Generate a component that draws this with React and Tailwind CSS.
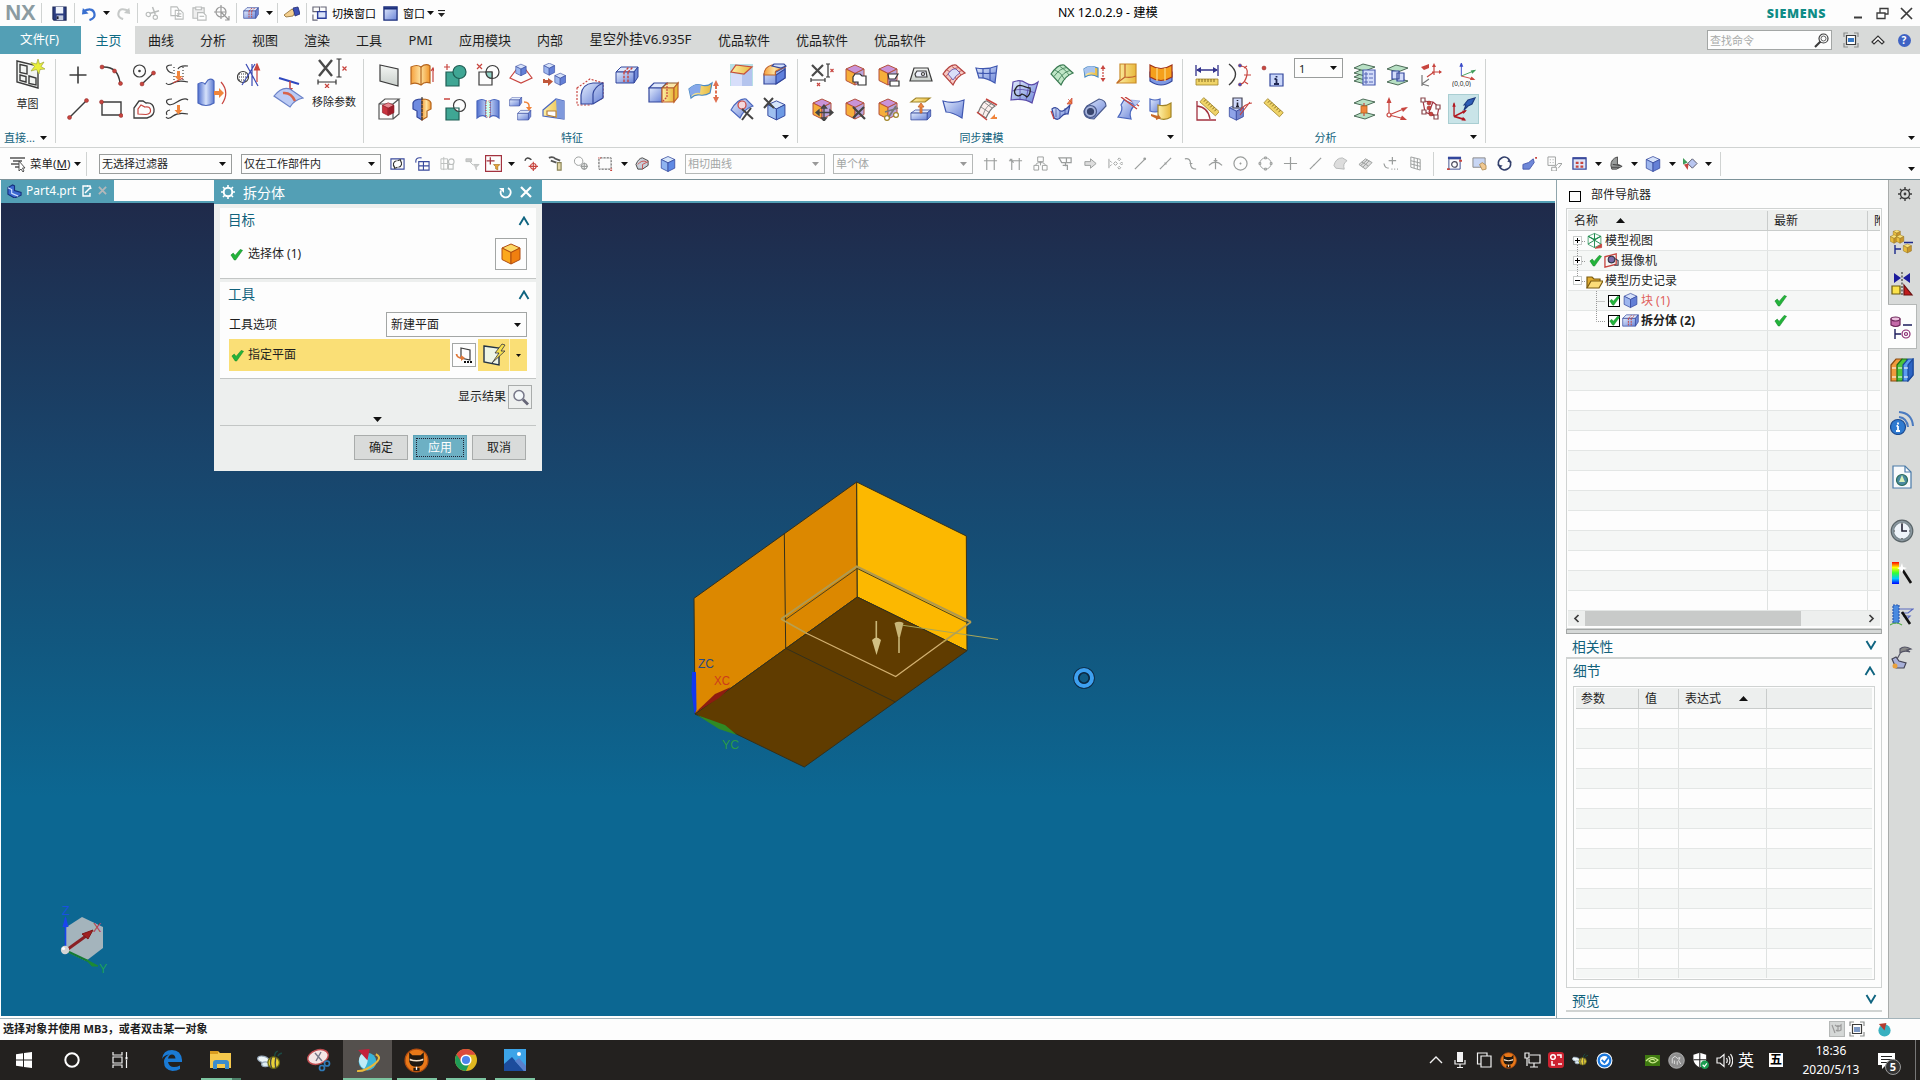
import React from 'react';

const S = ({ s = 24, v = '0 0 24 24', w, h, children, className = '' }) => (
  <svg width={w || s} height={h || s} viewBox={v} fill="none" stroke="#3c3c3c" strokeWidth="1.2" className={'shrink-0 ' + className}>
    {children}
  </svg>
);

const Defs = () => (
  <svg width="0" height="0" className="absolute">
    <defs>
      <linearGradient id="gB" x1="0" y1="0" x2="1" y2="1"><stop offset="0" stopColor="#e2ebfc" /><stop offset="1" stopColor="#6a84d8" /></linearGradient>
      <linearGradient id="gO" x1="0" y1="0" x2="1" y2="0"><stop offset="0" stopColor="#f6a03c" /><stop offset=".5" stopColor="#fde2a0" /><stop offset="1" stopColor="#f09428" /></linearGradient>
      <linearGradient id="gY" x1="0" y1="0" x2="1" y2="0"><stop offset="0" stopColor="#fdf0a8" /><stop offset="1" stopColor="#e8b83c" /></linearGradient>
      <linearGradient id="gC" x1="0" y1="0" x2="1" y2="0"><stop offset="0" stopColor="#4f6fce" /><stop offset=".5" stopColor="#d6e2fb" /><stop offset="1" stopColor="#5c7ad0" /></linearGradient>
      <linearGradient id="gP" x1="0" y1="0" x2="0" y2="1"><stop offset="0" stopColor="#f4f6f4" /><stop offset="1" stopColor="#c9cfcb" /></linearGradient>
      <linearGradient id="gR" x1="0" y1="0" x2="0" y2="1"><stop offset="0" stopColor="#f00" /><stop offset=".25" stopColor="#ff0" /><stop offset=".5" stopColor="#3f3" /><stop offset=".75" stopColor="#0cf" /><stop offset="1" stopColor="#00f" /></linearGradient>
    </defs>
  </svg>
);

const D = ({ x, y, r = 2, c = '#c8453f' }) => <circle cx={x} cy={y} r={r} fill={c} stroke="#8e2a28" strokeWidth=".5" />;
const Box = ({ t = '#d6e2fa', l = '#9db6ee', r = '#6480d6', st = '#33479c', tf }) => (
  <g transform={tf} stroke={st} strokeWidth="1" strokeLinejoin="round">
    <path d="M12 2L21 6 12 10.5 3 6z" fill={t} />
    <path d="M3 6L12 10.5V22L3 17.5z" fill={l} />
    <path d="M21 6L12 10.5V22L21 17.5z" fill={r} />
  </g>
);
const Slab = ({ tf, f = 'url(#gB)', st = '#33479c' }) => (
  <g transform={tf} stroke={st} strokeWidth="1" strokeLinejoin="round">
    <path d="M1 9L6 4H23L19 9z" fill="#dfe8fb" /><path d="M19 9L23 4V14L19 20z" fill="#6f88d8" /><path d="M1 9H19V20H1z" fill={f} />
  </g>
);
const Purp = ({ children }) => (
  <S><Box t="#c993d8" l="#f6ae3a" r="#b9a5dc" st="#b4503c" />{children}</S>
);
const Ruler = ({ tf }) => (
  <g transform={tf} strokeWidth=".8" stroke="#a08428"><path d="M1 0H23V6H1z" fill="#f0d468" /><path d="M4 0v3M7 0v3M10 0v3M13 0v3M16 0v3M19 0v3" stroke="#6b5310" /></g>
);
const Dart = ({ d, c = '#c8453f' }) => <path d={d} fill={c} stroke="none" />;
const RB = '#c8453f';

const Check = ({ s = 13 }) => (
  <S s={s} v="0 0 14 14"><path d="M1 7.5L3.5 5.5 5.5 8 11 1.5 13.5 2.5 6 13 4.5 12.8z" fill="#22b43a" stroke="#128426" strokeWidth=".6" /></S>
);
const Caret = ({ c = '#111' }) => <S w="7" h="4" v="0 0 7 4"><path d="M0 0H7L3.5 4z" fill={c} stroke="none" /></S>;
const Chev = ({ up }) => <S w="12" h="10" v="0 0 12 10"><path d={up ? 'M1.5 9L6 1.5 10.5 9' : 'M1.5 1L6 8.5 10.5 1'} stroke="#0f6480" strokeWidth="1.9" /></S>;
const RemoveParam = () => (
  <S w="30" h="30" v="0 0 30 30"><path d="M2 2L15 18M15 2L2 18" stroke="#4a4a4a" strokeWidth="2.4" /><path d="M22 1V19M19.500 1h5M19.500 19h5M1 24H19M1 21.500v5M19 21.500v5" stroke="#333" /><path d="M25.500 8.500l4 4M29.500 8.500l-4 4M8 26l4 4M12 26l-4 4" stroke={RB} /></S>
);
const RemoveParamSm = () => (
  <S><path d="M2 2L13 13M13 2L2 13" stroke="#4a4a4a" strokeWidth="2.2" /><path d="M18 1V14M16 1h4M16 14h4M1 17H15M1 15v4M15 15v4" stroke="#333" /><path d="M20.500 6l3 3M23.500 6l-3 3M7 20l3 3M10 20l-3 3" stroke={RB} /></S>
);

const sketchIcons = [
  <S><path d="M12 3.500V20.500M3.500 12H20.500" strokeWidth="1.600" /></S>,
  <S><path d="M4 20L20 4" strokeWidth="1.400" /><D x={3.500} y={20.500} /><D x={20.500} y={3.500} /></S>,
  <S><path d="M3 4Q19 3 21 20" strokeWidth="1.400" /><D x={3} y={4} /><D x={15.500} y={8} /><D x={21.500} y={20.500} /></S>,
  <S><path d="M3 5H22V18H3z" strokeWidth="1.400" /><D x={2.500} y={5} /><D x={22} y={18.500} /></S>,
  <S><circle cx="7.500" cy="8" r="6" /><circle cx="7.500" cy="8" r=".7" fill="#333" /><path d="M10 21L21 10.500" strokeWidth="1.400" /><D x={10} y={21} /><D x={21.500} y={10} /></S>,
  <S><path d="M2 21V11L7 4H11L14 6Q21 5 22 12T15 21z" strokeWidth="1.300" /><path d="M6 17V12L9 8 13 10Q18 9 18.500 13T14 17.500z" stroke={RB} /></S>,
  <S><path d="M7 2Q0 2 2 6T8 10M23 3Q15 2 13 6M1 20Q3 23 8 20T23 19" /><path d="M9 4V20M18 4V18" strokeDasharray="1 2" /><path d="M8 20Q14 17 18 15" stroke={RB} /><path d="M12 8h3v5h2.500l-4 4.500-4-4.500H12z" fill="#f0853c" stroke="none" /></S>,
  <S><path d="M7 2Q0 2 2 6T12 5T23 3M1 20Q3 23 8 19T23 17M5 13Q0 14 2 18" /><path d="M12 8h3v5h2.500l-4 4.500-4-4.500H12z" fill="#f0853c" stroke="none" /></S>,
];

const featureIcons = [
  <S><path d="M3 2L21 6V23L3 18z" fill="url(#gP)" /></S>,
  <S><path d="M2 7H16V22H2zM2 7L8 2H22L16 7M22 2V17L16 22" stroke="#555" /><Box t="#e88a92" l="#c8323f" r="#a11d2a" st="#8e1a24" tf="translate(3.500 4.500) scale(.64)" /></S>,
  <S><path d="M1 4Q7 1 11 4Q16 0 20 3V20Q15 18 11 22Q6 19 1 21z" fill="url(#gO)" stroke="#b5651d" /><path d="M11 4V22" stroke="#b5651d" /><path d="M23 6V19M21 8l2-3 1.500 3" stroke={RB} /></S>,
  <S><path d="M12 2Q4 2 3 6V12L7 14V20L12 23z" fill="#6f8be0" stroke="#33479c" /><path d="M12 2Q20 2 21 6V12L17 14V20L12 23z" fill="url(#gO)" stroke="#b5651d" /><path d="M12 0V24" strokeDasharray="3 1" /></S>,
  <S><path d="M3 9H16V23H3z" fill="#3fa694" stroke="#1f5e54" /><circle cx="16.500" cy="9" r="6.500" fill="#3fa694" stroke="#1f5e54" /><path d="M1 4H7M4 1V7" stroke={RB} /></S>,
  <S><path d="M3 11H16V23H3z" fill="#3fa694" stroke="#1f5e54" /><circle cx="16.500" cy="8.500" r="6" fill="#fdfdfd" /><path d="M10.500 11H16V14.500" stroke="#1f5e54" /><path d="M1 2H7" stroke={RB} strokeWidth="1.500" /></S>,
  <S><circle cx="16.500" cy="9" r="6.500" /><path d="M3 9H16V22H3z" /><path d="M10 9Q10 15 16 15.500V9z" fill="#8fd0c4" /><path d="M1 1l5 5M6 1L1 6" stroke={RB} /></S>,
  <S><path d="M1 4Q6 1 10 4V20Q6 17 1 21zM23 4Q18 1 14 4V20Q18 17 23 21z" fill="url(#gC)" stroke="#4a66bd" /><path d="M10 4h4V20h-4z" fill="#cfe" stroke={RB} strokeDasharray="1 1.500" /></S>,
  <S><path d="M10 3L1 15 12 20 23 15 14 3" stroke={RB} /><Box tf="translate(5 0) scale(.58)" /></S>,
  <S><Slab tf="translate(0 -2) scale(.55)" /><Slab tf="translate(8 11) scale(.6)" /><path d="M15 5Q21 5 20 11" stroke="#f0853c" strokeWidth="1.600" /><path d="M17 10h6l-3 4z" fill="#f0853c" stroke="none" /></S>,
  <S><Box tf="translate(0 -1) scale(.6)" /><Box tf="translate(11 9) scale(.6)" /><path d="M1 16V20H6V23L11 18.500 6 15V17H3V16z" fill="#c0573a" stroke="none" /></S>,
  <S><path d="M1 13L14 2 22 4V22L1 19z" fill="url(#gY)" stroke="#4a66bd" /><path d="M14 2L22 4V22L15 21z" fill="#7f99dc" stroke="none" /><path d="M5 14H14V20L5 18z" fill="#fff" stroke="#b5803d" /></S>,
];

const edgeIcons = [
  <S><path d="M0 1H23V23H0z" fill="#b8e0e6" stroke="none" /><path d="M1 10L12 12V23H1z" fill="#d7defa" stroke="none" /><path d="M12 12L22 5V23H12z" fill="#b4c4ee" stroke="none" /><path d="M6 2L22 4 14 11 1 9z" fill="url(#gY)" stroke="#c84f3a" /></S>,
  <S><path d="M1 13Q8 1 16 2L23 9Q14 12 10 21z" fill="url(#gB)" stroke="#4a66bd" /><circle cx="12" cy="8" r="4" fill="#f4d7dc" stroke={RB} /><path d="M12 12L23 22M21 11L12 23" stroke="#444" strokeWidth="2" /></S>,
  <S><path d="M1 11V21H13L22 15V4L13 9z" fill="url(#gB)" stroke="#33479c" /><path d="M13 12V21L22 15V6z" fill="#5f80dc" stroke="#33479c" /><path d="M9 2H20L22 4L13 8Q12 8 12.500 12H1Q1 4 9 2z" fill="url(#gO)" stroke="#c0622c" /><path d="M11 1H21L23 3 18 5 9 3z" fill="#cfdcfa" stroke="#33479c" /></S>,
  <S><Box t="#d6e6fa" l="#9fc0f0" r="#6d9ae4" tf="translate(2 2) scale(.95)" /><path d="M1 1L11 11M10 1L1 11" stroke="#444" strokeWidth="2" /></S>,
];

const gridSurf = (f, st) => (
  <><path d="M1 11Q8 1 14 2L23 10Q15 13 11 22z" fill={f} stroke={st} /><path d="M4 13.500Q10 5 17 4.500M8 18Q13 9 20 7.500M5 7Q11 9 15 17M10 3.500Q16 7 19 12" stroke={st} strokeWidth=".8" /></>
);
const syncIcons = [
  <RemoveParamSm />,
  <Purp><path d="M14 9V23M7 15.500H22M14 8l-2.500 3h5zM14 24l-2.500-3h5zM6 15.500l3-2.500v5zM23 15.500l-3-2.500v5z" fill="#fff" stroke="#444" strokeWidth="1.300" /></Purp>,
  <Purp><path d="M12 11h5l2 2h4v9h-8v-3h-5v-5z" fill="#fff" stroke="#333" /></Purp>,
  <Purp><path d="M10 10L22 22M21 10L10 21" stroke="#444" strokeWidth="2.200" /></Purp>,
  <Purp><path d="M12 11h10l-3 5h-6zM14 18h9v5h-9z" fill="#fff" stroke="#333" /></Purp>,
  <Purp><path d="M9 15L22 11M12 21L20 9" stroke="#777" strokeWidth="1.800" /><circle cx="11" cy="21" r="2.400" fill="#fff" stroke="#a08428" /><circle cx="20" cy="18" r="2.400" fill="#fff" stroke="#a08428" /></Purp>,
  <S><path d="M5 5H19L23 18H1z" fill="url(#gP)" /><path d="M8 8L17 8 18 14H7L6 11z" fill="#eef1fb" /><circle cx="14" cy="11" r="1.500" fill="#fff" /></S>,
  <S><path d="M7 1H21L16 5H2z" fill="url(#gY)" stroke="#a08428" /><Slab tf="translate(1 10.500) scale(.9 .62)" /><path d="M11 16V10H9L12 6l3 4h-2v6z" fill="#f0853c" stroke="#c0622c" strokeWidth=".8" /></S>,
  <S>{gridSurf('#f6c9c4', '#b4423f')}<path d="M6 11Q10 5 14 6L18 10Q14 12 11 17z" fill="#d9def8" stroke="#5a4aa8" strokeWidth=".8" /></S>,
  <S><path d="M1 4Q12 7 22 3L20 21Q10 15 4 15z" fill="url(#gB)" stroke="#3f57b0" /></S>,
  <S><path d="M1 5Q12 7 22 3L20 20Q10 14 4 15z" fill="url(#gB)" stroke="#3f57b0" /><path d="M2 10Q12 11 21 10M8 6V15M15 5V17" stroke="#3f57b0" /></S>,
  <S><path d="M3 16Q8 3 12 4L20 9Q15 12 11 21z" fill="#fdf0ee" stroke="#777" /><path d="M6 10l9 6M9 5l8 6M8 18Q11 9 16 7" stroke="#777" strokeWidth=".8" /><path d="M11 2L22 8M2 15L12 23" stroke={RB} strokeWidth="1.500" /><path d="M15 22l5-5v3h2v2h-3z" fill="#f0853c" stroke="none" /></S>,
];
const surfIcons = [
  <S>{gridSurf('#bfe6c6', '#3a7a52')}</S>,
  <S><path d="M2 12Q6 9 9 13T20 8L18 17Q14 16 11 20T4 21z" fill="url(#gB)" stroke="#33479c" /><path d="M6 11V20M10 13V21M15 11V17" strokeWidth=".7" stroke="#33479c" /><path d="M1 14L4 22" stroke={RB} /><path d="M18 2L22 6M22 1v6h-5z" fill="#f0853c" stroke={RB} strokeWidth=".7" /></S>,
  <S><path d="M1 6Q6 2 15 5V14Q8 10 2 14z" fill="url(#gY)" stroke="#4a8ac4" /><path d="M1 6Q6 2 12 4V10Q6 8 2 12z" fill="#a9c4ee" stroke="none" /><path d="M20 2l-2.500 4h5zM20 19l-2.500-4h5z" fill={RB} stroke="none" /><path d="M20 6v9" stroke={RB} strokeDasharray="2 1" /></S>,
  <S><path d="M4 9L16 2Q23 3 23 9L11 22Q1 22 1 14z" fill="url(#gB)" stroke="#4a5a8c" /><circle cx="7.500" cy="14.500" r="6" fill="#a7b4dc" stroke="#4a5a8c" /><circle cx="7.500" cy="14.500" r="3" fill="#39466f" stroke="#39466f" /></S>,
  <S><path d="M4 1H20V20H10L1 20 4 16z" fill="url(#gY)" stroke="#c98a28" /><path d="M9 1V14Q15 15 20 13M9 14L1 20" stroke="#c0622c" /></S>,
  <S><path d="M8 3L19 8Q12 14 15 22L2 20Q8 12 5 8z" fill="url(#gB)" stroke="#4a66bd" /><path d="M5 0L21 12M9 0L23 9" stroke={RB} strokeWidth="1.400" /><path d="M15 3L24 4 19 9z" fill="#b9c8f2" stroke="#7c92d8" strokeWidth=".6" /></S>,
  <S><path d="M1 9V18Q12 26 23 18V9z" fill="#7f99e4" stroke="#33479c" /><path d="M1 2Q12 9 23 2V14Q12 21 1 14z" fill="#f5a01c" stroke="#a33418" /><path d="M8 5V18M16 5V18" stroke="#fbd277" strokeWidth="1.400" /></S>,
  <S><path d="M1 2Q6 4 11 2V14Q6 16 1 14z" fill="url(#gB)" stroke="#4a66bd" /><path d="M9 8Q16 10 22 6V20Q16 24 9 21z" fill="url(#gY)" stroke="#a08428" /><path d="M2 17l7 2v-2l3 4-5 2v-1.500L2 19z" fill="#c86a28" stroke="none" /></S>,
];
const anaIcons = [
  <S><path d="M1 2V13M23 2V13M2 7H22" stroke="#33338c" strokeWidth="1.300" /><Dart d="M1 7L6 4V10zM23 7L18 4V10z" c="#33338c" /><Ruler tf="translate(0 16)" /></S>,
  <S><path d="M2 4V23H21M2 9Q13 10 15 22" stroke="#a3323f" strokeWidth="1.300" /><Ruler tf="translate(8 0) rotate(42) scale(.95)" /></S>,
  <S><path d="M1 1Q14 11 1 22" strokeWidth="1.400" /><path d="M13 3Q21 4 19 12T13 21M16 12h7M16 5l3-2M17 19l3 2" stroke={RB} /><D x={12} y={2.500} r={1.600} c="#3a4ac8" /><D x={12} y={21.500} r={1.600} c="#3a4ac8" /></S>,
  <S><Box t="#c5d2fa" l="#8fa4e8" r="#7585cc" tf="translate(-1 6) scale(.78)" /><path d="M5 1H14V11H5z" fill="#cfd9fa" stroke="#445" /><path d="M9.500 3v1M9.500 5.500v4M8 9.500h3" stroke="#223" strokeWidth="1.600" /><path d="M12 18L22 5M12 14q4-7 12-8" stroke={RB} /></S>,
  <S><D x={3} y={5} /><path d="M9 11H22V23H9z" fill="#c9d6fa" stroke="#33479c" /><path d="M15.500 13v1.500M15.500 16v5M13.500 16h2M13 21h5" stroke="#222a55" strokeWidth="1.800" /></S>,
  <S><Ruler tf="translate(6 1) rotate(42) scale(.95)" /></S>,
];
const leafs = (ys) => ys.map((y, i) => <path key={i} d={`M1 ${y}L10 ${y - 4} 22 ${y - 1} 12 ${y + 3}z`} fill="#b8e0c4" stroke="#3c5c48" strokeWidth=".9" />);
const tri = (c1, c2, c3) => (
  <><path d="M3 18V2" stroke={c1} /><path d="M3 18L20 11" stroke={c2} /><path d="M3 18L19 22" stroke={c3} /><Dart d="M3 0L.5 6H5.500z" c={c1} /><Dart d="M22 10L15 11 17 15z" c={c2} /><Dart d="M21 23L14 23 16 18.500z" c={c3} /></>
);
const layerIcons = [
  <S>{leafs([18, 14, 10, 5])}<path d="M10 7H22V22H10z" fill="#d3dcfa" stroke="#4a5cb0" /><path d="M12 10h2v2h-2zM12 14h2v2h-2zM12 18h2v2h-2zM16 11h4M16 15h4M16 19h4" stroke="#4a5cb0" strokeWidth=".9" /></S>,
  <S>{leafs([6, 19])}<path d="M11 6V19" stroke={RB} /><path d="M8 9h6v7H8z" fill="#f0853c" stroke="#b5651d" strokeWidth=".8" /></S>,
  <S>{leafs([6, 19])}<path d="M6 8h7v8H6zM11 10h7v8h-7z" fill="#d3dcfa" stroke="#33479c" /></S>,
  <S>{tri(RB, RB, RB)}<circle cx="3" cy="18" r="2" fill="#fff" stroke={RB} /></S>,
  <S><path d="M15 12V2M13 9H22M15 9L8 14" stroke={RB} /><Dart d="M23 9l-3-2v4zM15 0l-2 4h4zM2 4l8-3v4l-5 2z" /><path d="M3 23V12M3 21l7-5M3 21l7 2" stroke="#777" /></S>,
  <S><path d="M4 4L14 5 20 10 18 20 6 15zM4 4L6 15M14 5L10 15 18 20" stroke="#a3323f" /><D x={10} y={11} /><D x={12} y={17} /><D x={10} y={6} /><path d="M2 1h4v4H2zM17 8h4v4h-4zM3 13h4v4H3zM15 18h4v4h-4z" fill="#fff" stroke="#8a4a4f" /></S>,
  <S><g transform="translate(7 -1) scale(.78)">{tri('#3a4ac8', '#3f9c5a', RB)}</g><text x="0" y="23" fontSize="7" fill="#222" stroke="none" textLength="19" lengthAdjust="spacingAndGlyphs" className="font-['Liberation_Sans',sans-serif]">(0,0,0)</text></S>,
  <div className="flex h-[30px] w-[31px] shrink-0 items-center justify-center border border-[#a9ced2] bg-[#c9e4e8]"><S><g transform="translate(0 5) scale(.68 .8)" strokeWidth="2">{tri('#b01820', '#b01820', '#b01820')}</g><path d="M12 8L16 3 23 1 20 7 16 9 12 13 14 8z" fill="#2f5fb8" stroke="#1d3c80" /></S></div>,
];

const Grid2 = ({ items }) => (
  <div className="grid auto-cols-[33px] grid-flow-col grid-rows-[34px_34px]">
    {items.map((it, i) => <div key={i} className="flex items-center justify-center">{it}</div>)}
  </div>
);
const VSep = ({ className = '' }) => <div className={'w-px shrink-0 bg-[#d0d3d2] ' + className} />;
const Group = ({ label, children, className = '' }) => (
  <div className={'flex shrink-0 flex-col ' + className}>
    <div className="flex h-[76px] pt-1">{children}</div>
    <div className="relative flex h-[15px] items-center justify-center text-[11px] leading-none text-[#12627c]">
      <span className="mr-[17px]">{label}</span>
      <span className="absolute right-[8px] top-[5px]"><Caret /></span>
    </div>
  </div>
);
const Cell = ({ className, children }) => <div className={'flex shrink-0 items-center justify-center ' + className}>{children}</div>;

function TitleBar() {
  const G = '#b9bcbb';
  return (
    <div className="flex h-[26px] items-center text-[11px] text-black">
      <Cell className="w-[41px] text-[22px] font-bold leading-none text-[#8b9ba1]"><span className="font-['Liberation_Sans',sans-serif]">NX</span></Cell>
      <VSep className="h-5" />
      <Cell className="w-[34px]"><S s={15} v="0 0 16 16"><path d="M1 1H15V15H2L1 14z" fill="#2b3c80" stroke="#1c2858" /><path d="M4 1H12V8H4z" fill="#eef2fb" stroke="none" /><path d="M5 10H12V15H5z" fill="#c4cce0" stroke="none" /><path d="M6 11V14" strokeWidth="2" stroke="#223" /></S></Cell>
      <VSep className="-ml-[2px] h-5" />
      <Cell className="w-[26px]"><S s={15} v="0 0 16 16"><path d="M2 6Q12 1 14 7T9 15" stroke="#3a70d0" strokeWidth="2.400" /><path d="M1 9L2 2 8 8z" fill="#3a70d0" stroke="none" /></S></Cell>
      <Cell className="w-[11px]"><Caret /></Cell>
      <Cell className="w-[23px]"><S s={14} v="0 0 16 16"><path d="M14 6Q4 1 2 7T7 15" stroke="#c6c9c8" strokeWidth="2.400" /><path d="M15 9L14 2 8 8z" fill="#c6c9c8" stroke="none" /></S></Cell>
      <VSep className="ml-[2px] h-5" />
      <Cell className="w-[28px]"><S s={15} v="0 0 16 16"><path d="M8 1L11 9M15 5L5 8" stroke={G} strokeWidth="1.600" /><circle cx="3.500" cy="9" r="2.300" stroke={G} /><circle cx="11" cy="12" r="2.300" stroke={G} /></S></Cell>
      <Cell className="w-[21px]"><S s={14} v="0 0 16 16"><path d="M1 1H8L10 4V11H1zM6 5H12L15 8V15H6z" fill="#fff" stroke={G} /><path d="M8 9h5M8 12h5" stroke={G} /></S></Cell>
      <Cell className="w-[24px]"><S s={15} v="0 0 16 16"><path d="M1 2H13V13H1z" fill="#eee" stroke={G} /><path d="M4 1h6v3H4zM6 7H12L15 10V15H6z" fill="#fff" stroke={G} /><path d="M8 11h5" stroke={G} /></S></Cell>
      <Cell className="w-[22px]"><S s={16} v="0 0 16 16"><circle cx="7" cy="7" r="5" stroke="#999" /><path d="M7 0V14M0 7H12M7 7L15 15M15 11V15H11" stroke="#999" /></S></Cell>
      <VSep className="ml-[3px] h-5" />
      <Cell className="w-7"><SplitBody s={16} /></Cell>
      <Cell className="w-[8px]"><Caret /></Cell>
      <VSep className="ml-1 h-5" />
      <Cell className="w-[28px]"><S s={16} v="0 0 16 16"><path d="M0 10L8 4 11 7 9 11 2 12z" fill="#f4cf8e" stroke="#8a6a30" strokeWidth=".8" /><path d="M9 3L14 2 16 9 11 11z" fill="#3c4fb5" stroke="#222a70" strokeWidth=".8" /></S></Cell>
      <VSep className="h-5" />
      <Cell className="w-[25px]"><S s={15} v="0 0 16 16"><path d="M1 1H8V6H1zM9 1h6v5" stroke="#667" /><path d="M6 6H15V13H6z" fill="#dbe4fa" stroke="#2c3f9c" strokeWidth="1.500" /><path d="M1 9V15H6" stroke="#667" /></S></Cell>
      <span className="w-[50px] whitespace-nowrap leading-none">切换窗口</span>
      <Cell className="w-[17px]"><S s={15} v="0 0 16 16"><path d="M1 1H15V15H1z" fill="url(#gB)" stroke="#1b2e7c" strokeWidth="1.400" /><path d="M1 2.500H15" stroke="#1b2e7c" strokeWidth="2.500" /></S></Cell>
      <span className="ml-[4px] w-[24px] whitespace-nowrap leading-none">窗口</span>
      <Caret />
      <span className="ml-[4px]"><S w="7" h="7" v="0 0 7 7"><path d="M0 .5H7" stroke="#222" /><path d="M0 3H7L3.500 7z" fill="#222" stroke="none" /></S></span>
      <span className="ml-[613px] w-[160px] whitespace-nowrap text-[12.300px] leading-none">NX 12.0.2.9 - 建模</span>
      <span className="ml-auto mt-[3px] text-[12.500px] font-black leading-none tracking-[.6px] text-[#0f8c86] font-['Open_Sans','Noto_Sans',sans-serif]">SIEMENS</span>
      <Cell className="ml-[20px] w-6"><S s={12} v="0 0 12 12"><path d="M2 10.500H10" strokeWidth="2" /></S></Cell>
      <Cell className="w-6"><S s={13} v="0 0 13 13"><path d="M1 6H9V11.500H1zM4 6V1.500H12V7H9" strokeWidth="1.300" /></S></Cell>
      <Cell className="mr-px w-[25px]"><S s={13} v="0 0 13 13"><path d="M1 1L12 12M12 1L1 12" strokeWidth="1.700" /></S></Cell>
    </div>
  );
}

const SplitBody = ({ s = 24 }) => (
  <S s={s}><Slab /><path d="M9 9V20M9 9L14 4M13 9V20M13 9L18 4" stroke={RB} strokeDasharray="2.500 1.200" strokeWidth="1.400" /></S>
);

const Tab = ({ className, children }) => <div className={'flex h-full shrink-0 items-center justify-center whitespace-nowrap leading-none ' + className}>{children}</div>;

function TabBar() {
  return (
    <div className="flex h-7 items-center bg-[#d8dad9] text-[13px] text-[#1e1e1e]">
      <Tab className="w-[81px] bg-[#539fb5] pr-[2px] text-[12.500px] text-white">文件(F)</Tab>
      <Tab className="w-[54px] bg-[#fdfdfd] pl-px text-[#0f6b85]">主页</Tab>
      <Tab className="w-[52px]">曲线</Tab>
      <Tab className="w-[52px]">分析</Tab>
      <Tab className="w-[52px]">视图</Tab>
      <Tab className="w-[52px]">渲染</Tab>
      <Tab className="w-[52px]">工具</Tab>
      <Tab className="w-[51px]">PMI</Tab>
      <Tab className="w-[78px]">应用模块</Tab>
      <Tab className="w-[52px]">内部</Tab>
      <Tab className="w-[129px] text-[13.300px]">星空外挂V6.935F</Tab>
      <Tab className="w-[78px]">优品软件</Tab>
      <Tab className="w-[78px]">优品软件</Tab>
      <Tab className="w-[78px]">优品软件</Tab>
      <div className="ml-auto flex h-5 w-[125px] items-center justify-between border border-[#a3a6a5] bg-[#fdfdfd] pl-[2px] pr-[2px] text-[11px] leading-none text-[#a9abaa]">
        查找命令
        <S s={15} v="0 0 15 15"><circle cx="9.500" cy="5.500" r="4.500" /><circle cx="9.500" cy="5.500" r="2.500" strokeWidth=".8" /><path d="M6.500 8.500L1 14" strokeWidth="2.200" /></S>
      </div>
      <Cell className="ml-[6px] w-[26px]"><S s={16} v="0 0 16 16"><path d="M1 5V1H5M11 1H15V5M15 11V15H11M5 15H1V11" stroke="#8a8d8c" /><path d="M3.500 3.500h9v9h-9z" fill="#fff" /><path d="M5 6h6v4H5z" fill="#3a7ac4" stroke="none" /></S></Cell>
      <Cell className="w-[27px]"><S w="14" h="12" v="0 0 14 12"><path d="M1 8L7 2 13 8 11 10 7 6 3 10z" fill="#fff" stroke="#333" /></S></Cell>
      <Cell className="mr-[3px] w-[26px]"><div className="flex size-[13px] items-center justify-center rounded-full bg-[#3f63c4] text-[10px] font-bold leading-none text-white">?</div></Cell>
    </div>
  );
}

function Ribbon() {
  return (
    <div className="flex h-[94px] shrink-0 border-b border-[#d0d3d2] text-[11px] text-[#1e1e1e]">
      <div className="flex w-[55px] flex-col items-center">
        <div className="mt-[4px] h-[33px] pl-[3px]"><S s={31} v="0 0 31 31"><path d="M3 3L24 8V30L3 24z" fill="#f2f4f2" strokeWidth="1.400" /><path d="M6 6.500L13 8V16L6 14.500zM6 17L12 18.500V24L6 22.500zM15 18L22 20V27L15 25.500z" strokeWidth="1.400" /><path d="M24 1L25.500 6 30 4 27 8.500 31 11 26 11.500 25 16 22.500 11.500 17 13 20.500 8.500 17 4.500 22.500 6z" fill="#e8ee3c" stroke="#a0a83a" strokeWidth=".7" /></S></div>
        <div className="mt-[7px] leading-none">草图</div>
        <div className="mt-auto mb-[4px] flex w-full items-center pl-1 text-[11px] leading-none text-[#12627c]">直接...<span className="ml-[5px]"><Caret /></span></div>
      </div>
      <VSep className="mt-[5px] h-[84px]" />
      <div className="flex pl-[5px] pt-1">
        <Grid2 items={sketchIcons} />
        <Cell className="h-[68px] w-[38px]"><S s={30} v="0 0 30 30"><path d="M1 7Q5 4 8 7L11 3Q15 1 17 4V26Q9 31 1 26z" fill="url(#gC)" stroke="#4a66bd" /><path d="M24 5Q33 15 25 27" stroke={RB} /><path d="M17 14h5v-3l5 5-5 5v-3h-5z" fill="#f0853c" stroke="none" /></S></Cell>
        <Cell className="h-[34px] w-9"><S><circle cx="6" cy="14" r="5.500" /><path d="M0 14H12M2 11h8M2 17h8" strokeDasharray="1 1" /><path d="M9 1L21 23M15 1V23M18 1L5 22" stroke="#3a4ab5" /><path d="M20 5V19M20 1l-2.500 6h5z" fill={RB} stroke={RB} /></S></Cell>
        <Cell className="h-[68px] w-[42px]"><S s={31} v="0 0 31 31"><path d="M6 1L26 7" stroke="#2f48c0" strokeWidth="2" /><path d="M17 4V13" stroke={RB} strokeWidth="1.500" /><path d="M14 11h6l-3 5z" fill={RB} stroke="none" /><path d="M1 19Q9 9 17 12L30 21Q21 23 17 30z" fill="#bccbf4" stroke="#6a82c8" /><path d="M10 16Q18 15 22 24" stroke="#d8634a" strokeWidth="2.500" /></S></Cell>
        <div className="flex w-[50px] flex-col items-center">
          <div className="h-[32px] -ml-[4px]"><RemoveParam /></div>
          <div className="mt-[6px] whitespace-nowrap leading-none">移除参数</div>
        </div>
      </div>
      <VSep className="ml-[4px] mt-[5px] h-[84px]" />
      <Group label="特征" className="w-[433px]">
        <div className="flex pl-2">
          <Grid2 items={featureIcons} />
          <Cell className="h-[68px] w-[39px]"><S s={28} v="0 0 28 28"><path d="M1 10L14 1 27 5V20L13 27 1 27z" stroke={RB} strokeDasharray="2 1.500" /><path d="M5 17Q6 6 17 5H27V20L17 26H5z" fill="url(#gB)" stroke="#33479c" /><path d="M17 26V16Q18 9 27 5" stroke="#33479c" /></S></Cell>
          <Cell className="h-[34px] w-9"><SplitBody /></Cell>
          <Cell className="h-[68px] w-[38px]"><S w="32" h="24" v="0 0 32 24"><path d="M1 8L6 3H19L14 8z" fill="#dfe8fb" stroke="#33479c" /><path d="M14 8L19 3H30L26 8z" fill="#fbe7a8" stroke="#8a5a30" /><path d="M1 8H14V22H1z" fill="url(#gB)" stroke="#33479c" /><path d="M14 8H26V22H14z" fill="url(#gY)" stroke="#c0622c" /><path d="M26 8L30 3V17L26 22z" fill="#e8b83c" stroke="#c0622c" /><path d="M19 3V17L14 22" stroke={RB} strokeDasharray="2 1" /></S></Cell>
          <Cell className="h-[68px] w-[42px]"><S w="32" h="24" v="0 0 32 24"><path d="M1 9Q7 3 13 5T24 3L22 13Q17 16 12 15T3 18z" fill="url(#gY)" stroke="#4a8ac4" /><path d="M1 9Q7 3 13 5L12 13Q6 12 3 17z" fill="#86a8ea" stroke="none" /><path d="M28 0l-3 6h6zM28 23l-3-6h6z" fill="#e07050" stroke="none" /><path d="M28 6V17" stroke="#e07050" strokeDasharray="3 1.500" strokeWidth="2" /></S></Cell>
          <Grid2 items={edgeIcons} />
        </div>
      </Group>
      <VSep className="mt-[5px] h-[84px]" />
      <Group label="同步建模" className="w-[384px]">
        <div className="flex pl-[7px]">
          <Grid2 items={syncIcons} />
          <Cell className="h-[68px] w-[42px]"><S s={29} v="0 0 29 29"><path d="M3 4Q10 1 16 5T28 4L22 25Q14 20 1 22z" fill="url(#gB)" stroke="#5a4aa8" /><path d="M2 13Q12 9 25 15M10 3V21M19 6L16 22" stroke="#5a4aa8" strokeWidth=".8" /><path d="M6 10Q8 6 13 8T20 10Q21 16 17 19Q15 17 12 16Q9 19 6 17Q3 14 6 10z" stroke="#222" strokeWidth="1.300" /></S></Cell>
          <Grid2 items={surfIcons} />
        </div>
      </Group>
      <VSep className="mt-[5px] h-[84px]" />
      <Group label="分析" className="w-[302px]">
        <div className="flex pl-[7px]">
          <Grid2 items={anaIcons} />
          <div className="ml-[5px] mr-[5px] mt-[-2px] flex h-5 w-[49px] translate-y-[2px] items-center justify-between self-start border border-[#9a9d9c] bg-[#fdfdfd] pl-1 pr-[5px] text-[11px] leading-none">1<Caret /></div>
          <Grid2 items={layerIcons} />
        </div>
      </Group>
      <VSep className="mt-[5px] h-[84px]" />
      <div className="mb-[7px] ml-auto mr-[5px] self-end"><Caret /></div>
    </div>
  );
}

const Combo = ({ className, children, dim }) => (
  <div className={'flex h-5 shrink-0 items-center justify-between border bg-[#fdfdfd] pl-[2px] pr-[5px] text-[11px] leading-none ' + (dim ? 'border-[#b5b8b7] text-[#a3a6a5] ' : 'border-[#9a9d9c] text-[#1e1e1e] ') + className}>
    {children}<Caret c={dim ? '#999' : '#111'} />
  </div>
);
const G = '#9a9d9c';
const T = ({ d, f = 'none', c = G, w = 1, children }) => <S s={15} v="0 0 16 16"><path d={d} fill={f} stroke={c} strokeWidth={w} />{children}</S>;

const filterIcons = [
  <T c="#3a4a9c" d="M1 3H15V14H1z" w={1.200}><path d="M5 12A4 4 0 0 1 7 5M11 5A4 4 0 0 1 9 12M4 10l1 3 3-1M12 7l-1-3-3 1" stroke="#333" /></T>,
  <T c="#3a4a9c" d="M4 6H15V15H4zM4 10.500H15M9 6V15" w={1.200}><path d="M1 7Q0 1 7 2" stroke="#3a4a9c" /></T>,
  <T c="#bcbfbe" d="M1 3H8V14H1zM4 1V15M1 8H8"><circle cx="12" cy="6" r="3" stroke="#bcbfbe" /><path d="M9 9h5v5H9z" stroke="#bcbfbe" /></T>,
  <T c="#bcbfbe" d="M1 3h6v3H1zM9 9h6l-3 3v3M5 6l4 4" f="#ccc" />,
];
const selIcons = [
  <T c="#444" d="M2 5Q4 0 9 4" w={1.600}><circle cx="11" cy="11" r="3" stroke={RB} /><path d="M11 6V16M6 11H16" stroke={RB} /></T>,
  <T c="#555" d="M1 2Q5 0 8 3L13 5M3 5L9 7" w={2}><path d="M10 7h4v8h-4z" fill="#e3d7a8" stroke="#8a8458" /></T>,
  <T d="M6 1A4.500 4.500 0 1 0 10.500 5.500A4.500 4.500 0 0 0 6 1" c={G}><circle cx="12" cy="11" r="3" stroke={G} /><path d="M12 7v8M8 11h8" stroke={G} /></T>,
  <T c="#444" d="M1 2H14V14H1z"><path d="M0 2h3M14 13v3" stroke={RB} strokeWidth="2" /><path d="M1 2H14V14H1z" stroke="#fff" strokeDasharray="1.500 2" strokeWidth="1.400" /></T>,
];
const snapIcons = [
  <T d="M4 2V15M12 2V15M1 5H15" w={1.200} />, <T d="M4 3V15M12 2V15M1 5H15M2 3l4 4" w={1.200} />, <T d="M5 1h6v5H5zM1 10h5v5H1zM10 10h5v5h-5zM8 6v4M3 10Q3 7 8 7T13 10" />,
  <T d="M1 2H9V7H4zM9 2h5v5H9M5 10h5v5M8 7v4" w={1.300} />, <T d="M2 6H8V3L14 8 8 13V10H2z" f="#ddd" />, <T d="M1 3v10M2 5l2 2M2 11l2-2M8 6l2 2-2 2-2-2zM12 2l1.500 1.500L12 5l-1.500-1.500zM12 11l1.500 1.500L12 14l-1.500-1.500zM14.500 6.500L16 8l-1.500 1.500L13 8z" />,
  <T d="M2 14L13 3" w={1.300}><path d="M11 3a1.500 1.500 0 1 0 3 0a1.500 1.500 0 1 0-3 0" fill={G} stroke="none" /></T>, <T d="M2 14L14 2M7 7l2 2" w={1.300} />, <T d="M2 3Q8 2 8 8T14 14M7 8h3" w={1.300} />,
  <T d="M1 10Q8 3 15 10M8 2V14M6 5h4" w={1.300} />, <T d="M8 1A7 7 0 1 0 8 15A7 7 0 1 0 8 1M8 7v2M7 8h2" w={1.300} />, <T d="M8 2A6 6 0 1 0 8 14A6 6 0 1 0 8 2M7 1h2v2H7zM13 7h2v2h-2zM7 13h2v2H7zM1 7h2v2H1z" />,
  <T d="M8 1V15M1 8H15" w={1.300} />, <T d="M2 14L14 2M6 9l1 1" w={1.300} />, <T d="M1 10Q3 2 10 2L15 5Q10 8 12 14L3 13z" f="#ddd" c="#b5b8b7" />,
  <T d="M1 9L8 3 15 7 8 14zM4 6.500l7 4M5 12l7-7M3 10l7-6" f="#ddd" />, <T d="M10 1V9M6 5H14M1 8Q2 13 6 13M9 14h1M12 14h1M15 14h1" w={1.300} />, <T d="M3 1L13 3.500V15L3 12zM6.500 2V13M10 3V14M3 5L13 7.500M3 8.500L13 11" />,
];
const viewIcons = [
  <T c="#3a4a8c" d="M2 3H14V14H2z"><path d="M1 2H15" stroke="#33479c" strokeWidth="2.500" /><circle cx="8" cy="9" r="3" stroke="#445" /><path d="M0 14h3M13 5h3" stroke={RB} strokeWidth="2" /></T>,
  <T c="#888" d="M1 2H14V12H1z" f="#c8d6f4"><path d="M8 9l3-2 4 3v4l-4 1z" fill="#f0c890" stroke="#a07838" strokeWidth=".7" /></T>,
  <T c="#33406c" d="M13 4A6.300 6.300 0 0 0 2 10M3 12A6.300 6.300 0 0 0 14 6" w={1.800}><path d="M0 9l3 4 3-3zM16 7l-3-4-2 3z" fill="#33406c" stroke="none" /></T>,
  <T c="#4a5cb0" d="M1 9L7 7 12 3 13 7 8 14 1 14z" f="#6f88d8"><path d="M14 1h2v2h-2z" fill={RB} stroke="none" /></T>,
  <T d="M1 1H9V10H1zM3 4h1M6 4h1M3 7h1M6 7h1M5 12h5v4H5zM8 12l4-4h4l-4 5" />,
  <T c="#3a4a9c" d="M1 2H15V14H1z" f="#dfe6fa" w={1.400}><path d="M1 2.500H15" stroke="#3a4a9c" strokeWidth="2" /><path d="M4 6h3v2.500H4zM9 6h3v2.500H9zM4 10h3v2.500H4zM9 10h3v2.500H9z" fill={RB} stroke="none" /></T>,
];
const Slot = ({ children }) => <Cell className="w-[25px]">{children}</Cell>;

function MenuBar() {
  return (
    <div className="flex h-8 shrink-0 items-center border-b border-[#7c9299]">
      <div className="flex w-[86px] items-center pl-[10px] text-[11.500px] leading-none text-[#1e1e1e]">
        <S s={16} v="0 0 16 16"><path d="M0 2H15M3 5H12M1 8H9M5 11h4" stroke="#555" strokeWidth="1.500" /><path d="M9 5V15L11 13 13 16 14 15 12.500 12H15z" fill="#fff" stroke="#444" strokeWidth=".9" /></S>
        <span className="ml-[4px] whitespace-nowrap">菜单(<u>M</u>)</span><span className="ml-[4px]"><Caret /></span>
      </div>
      <VSep className="h-6" />
      <Combo className="ml-3 w-[133px]">无选择过滤器</Combo>
      <Combo className="ml-[9px] w-[140px]">仅在工作部件内</Combo>
      <div className="ml-1 flex items-center">{filterIcons.map((x, i) => <Slot key={i}>{x}</Slot>)}</div>
      <Cell className="-ml-[2px] mr-[2px] w-5"><S s={17} v="0 0 16 16"><path d="M.5.5H15.500V15.500H.5z" stroke="#a3323f" /><path d="M5 2V9M1.500 5.500H9" stroke="#a3323f" /><path d="M8 9h6l-2 2v3l-2-1v-2z" fill="#e8a83c" stroke="#a06818" strokeWidth=".6" /></S></Cell>
      <Cell className="w-[13px]"><Caret /></Cell>
      {selIcons.map((x, i) => <Slot key={i}>{x}</Slot>)}
      <Cell className="w-3"><Caret /></Cell>
      <Slot><T c="#444" d="M1 9Q4 2 8 2L14 5V10L8 14H3z" f="#c9cfd8"><path d="M3 9Q7 4 12 6M8 14V9L14 6" stroke={RB} strokeWidth=".9" /></T></Slot>
      <Slot><S s={18}><Box t="#d6e6fa" l="#8fb4f0" r="#5f8ae4" /></S></Slot>
      <Combo dim className="ml-[5px] w-[140px]">相切曲线</Combo>
      <Combo dim className="ml-[8px] w-[140px]">单个体</Combo>
      <div className="ml-[5px] flex items-center">{snapIcons.map((x, i) => <Slot key={i}>{x}</Slot>)}</div>
      <VSep className="ml-[5px] h-6" />
      <div className="ml-[8px] flex items-center">{viewIcons.map((x, i) => <Slot key={i}>{x}</Slot>)}</div>
      <Cell className="w-3"><Caret /></Cell>
      <Slot><T c="#444" d="M2 10Q2 3 9 1V9L14 11 8 14H3z" f="#9a9d9c"><path d="M4 9L12 10M3 12h8" stroke="#444" /></T></Slot>
      <Cell className="w-[10px]"><Caret /></Cell>
      <Cell className="w-[27px]"><S s={18}><Box /></S></Cell>
      <Cell className="w-3"><Caret /></Cell>
      <Cell className="w-6"><T c="#556" d="M10 3L15 8 10 13 5 8z" f="#b9c6f0"><path d="M0 2l5 5-5 2z" fill="#3f9c5a" stroke="none" /><path d="M1 9l5-1-1 7z" fill={RB} stroke="none" /></T></Cell>
      <Cell className="w-3"><Caret /></Cell>
      <VSep className="ml-[6px] h-6" />
      <div className="ml-auto mr-[5px] mt-[10px]"><Caret /></div>
    </div>
  );
}

const Scene = () => (
  <svg width="1554" height="814" viewBox="1 203 1554 814" fill="none" className="block font-['Liberation_Sans',sans-serif]">
    <g stroke="#33301c" strokeWidth="1" strokeLinejoin="round">
      <path d="M856.700 482L694 598.300 695 714 857.300 597z" fill="#dc8800" />
      <path d="M856.700 482L966.300 536 967 650.700 857.300 597z" fill="#fcb800" />
      <path d="M857.300 597L967 650.700 804.300 767 695 714z" fill="#603c00" />
      <path d="M784.300 533.300L785.700 648.300M785.700 648.300L895.300 702" />
    </g>
    <path d="M781 619L856.700 566.500 971 622" stroke="#b09a50" strokeWidth="2" />
    <path d="M781 619L806 633M971 622L943 642" stroke="#b8a050" strokeWidth="1.600" />
    <path d="M785 620L857.300 568.500 966 622" stroke="#4a4220" strokeWidth="1" />
    <path d="M806 633L895.700 676.500 943 642" stroke="#d2b070" strokeWidth="1.300" />
    <path d="M903 625.300L998 639.500" stroke="#a8a65a" />
    <path d="M876.300 621V640M899 635V653" stroke="#c9b678" strokeWidth="1.600" />
    <path d="M872 640Q876.500 635 881 640L876.500 655z" fill="#d2c083" /><path d="M894.500 623Q899 620.500 903.500 623L900 637H898z" fill="#c9b678" />
    <path d="M692 672L696 672 696.500 710 694.500 714 691.500 692z" fill="#1238f0" />
    <path d="M695 713L715 694 731 687 719 698z" fill="#8e1c10" />
    <path d="M697 715L725 725 737 735 719 729z" fill="#2f8a24" />
    <g fontSize="13.500"><text x="698" y="667.500" fill="#2a4a84" textLength="16" lengthAdjust="spacingAndGlyphs">ZC</text><text x="714" y="684.500" fill="#cc3c1c" textLength="16" lengthAdjust="spacingAndGlyphs">XC</text><text x="722" y="749" fill="#2a9a48" textLength="17" lengthAdjust="spacingAndGlyphs">YC</text></g>
    <circle cx="1084" cy="678" r="8" stroke="#0c2740" strokeWidth="5.600" /><circle cx="1084" cy="678" r="8" stroke="#3ea0f0" strokeWidth="4" /><circle cx="1084" cy="678" r="5" stroke="#0c2740" strokeWidth="1.200" />
    <path d="M82 917L103 927V948L86 961 65 951V928z" fill="#a4b4bc" />
    <path d="M65.500 950V918" stroke="#1a44ee" strokeWidth="1.600" /><path d="M62.500 927L65.500 916 68.500 927z" fill="#1a44ee" />
    <path d="M68 949L86 936" stroke="#8a2024" strokeWidth="3" /><path d="M82 934L93 930 88 939z" fill="#a02020" stroke="#7c1818" />
    <path d="M69 952L88 961" stroke="#147a34" strokeWidth="2" /><path d="M86 959.500L98 966 92 966z" fill="#1c8a34" stroke="#1c8a34" />
    <circle cx="65" cy="950" r="4.200" fill="#d4d4d4" /><circle cx="63.500" cy="948.500" r="1.600" fill="#fff" />
    <g fontSize="12.500"><text x="62" y="914.500" fill="#1a50e0">Z</text><text x="93" y="932" fill="#b8404c">X</text><text x="99" y="973" fill="#1ca058">Y</text></g>
  </svg>
);

const Btn = ({ children, active }) => (
  <div className={'flex h-[25px] w-[54px] items-center justify-center border p-[2px] leading-none ' + (active ? 'border-[#5ba3b8] bg-[#6db0c4] text-white' : 'border-[#a9acab] bg-[#d9dbda]')}>
    <span className={'flex h-full w-full items-center justify-center ' + (active ? 'border border-dotted border-[#223]' : '')}>{children}</span>
  </div>
);

const Dialog = () => (
  <div className="absolute left-[214px] top-0 flex h-[291px] w-[328px] flex-col bg-[#edefee] text-[12px] text-[#1e1e1e]">
    <div className="flex h-6 items-center bg-[#539fb5] pl-[7px] pr-[10px] text-[14px] leading-none text-white">
      <S s={14} v="0 0 14 14"><circle cx="7" cy="7" r="4.300" stroke="#fff" strokeWidth="2" /><path d="M7 0v3M7 11v3M0 7h3M11 7h3M2 2l2 2M10 10l2 2M2 12l2-2M10 4l2-2" stroke="#fff" strokeWidth="1.600" /></S>
      <span className="ml-[8px] mt-px">拆分体</span>
      <span className="ml-auto mr-[8px]"><S s={13} v="0 0 13 13"><path d="M9 2A5 5 0 1 1 2 4.500" stroke="#fff" strokeWidth="1.900" /><path d="M0 2h5v5z" fill="#fff" stroke="none" /></S></span>
      <S s={12} v="0 0 12 12"><path d="M1 1L11 11M11 1L1 11" stroke="#fff" strokeWidth="2.200" /></S>
    </div>
    <div className="mx-[6px] mt-1 h-[71px] border-b border-[#c3c6c5] bg-[#fdfdfd] pl-2 pr-[9px]">
      <div className="flex h-[25px] items-center justify-between text-[13.500px] leading-none text-[#12627c]">目标<span className="-mr-[3px]"><Chev up /></span></div>
      <div className="mt-[5px] flex h-8 items-center leading-none"><span className="ml-[2px]"><Check /></span><span className="ml-[5px]">选择体 (1)</span>
        <div className="ml-auto flex size-8 items-center justify-center border border-[#a3a6a5]"><S><Box t="#fdd864" l="#fca81c" r="#f08010" st="#b04c10" /></S></div>
      </div>
    </div>
    <div className="mx-[6px] mt-[3px] h-[97px] border-b border-[#c3c6c5] bg-[#fdfdfd] pl-2 pr-[9px]">
      <div className="flex h-[26px] items-center justify-between text-[13.500px] leading-none text-[#12627c]">工具<span className="-mr-[3px]"><Chev up /></span></div>
      <div className="mt-[4px] flex h-[25px] items-center justify-between pl-[1px] leading-none">工具选项
        <div className="flex h-[25px] w-[141px] items-center justify-between border border-[#a3a6a5] pl-1 pr-[5px]">新建平面<Caret /></div>
      </div>
      <div className="mt-[2px] flex h-8 items-center pl-[1px] leading-none">
        <div className="flex h-8 w-[221px] items-center bg-[#fadf76] pl-[2px]"><Check /><span className="ml-[4px]">指定平面</span></div>
        <div className="ml-[2px] flex size-6 items-center justify-center border border-[#a3a6a5]"><S s={18} v="0 0 18 18"><path d="M6 2L15 4V14L6 12z" /><path d="M1.500 8Q2 12 7 12" stroke="#e07838" strokeWidth="1.800" /><path d="M6 9v6l4-3z" fill="#e07838" stroke="none" /><path d="M9 16h2M12 16h2M15 16h2" stroke="#111" strokeWidth="2" /></S></div>
        <div className="ml-[2px] flex h-8 w-[31px] items-center justify-center bg-[#fadf76]"><S><path d="M2 3L17 5V22L2 19z" fill="#eef5e6" stroke="#234" strokeWidth="1.400" /><path d="M20 1L13 10H17L10 20 23 8H19L23 2z" fill="#f7e14c" stroke="#334" strokeWidth=".8" /></S></div>
        <div className="flex h-8 flex-1 items-center justify-center border-l border-[#fdf3c8] bg-[#fadf76]"><S w="5" h="3" v="0 0 7 4"><path d="M0 0H7L3.500 4z" fill="#111" stroke="none" /></S></div>
      </div>
    </div>
    <div className="mt-[6px] flex h-6 items-center justify-end pr-[10px] leading-none">显示结果
      <div className="ml-[2px] flex size-6 items-center justify-center border border-[#a9acab]"><S s={17} v="0 0 17 17"><circle cx="7" cy="6.500" r="5" fill="#f4f8fa" stroke="#778" strokeWidth="1.500" /><path d="M11 10.500L16 15.500" stroke="#667" strokeWidth="2.800" /></S></div>
    </div>
    <div className="mx-[6px] flex h-[17px] items-center justify-center border-b border-[#c3c6c5] pr-[1px] pt-[4px]"><S w="9" h="5" v="0 0 7 4"><path d="M0 0H7L3.500 4z" fill="#111" stroke="none" /></S></div>
    <div className="mt-[9px] flex justify-end gap-[5px] pr-4"><Btn>确定</Btn><Btn active>应用</Btn><Btn>取消</Btn></div>
  </div>
);

const Expander = ({ minus }) => (
  <div className="relative z-10 flex size-[9px] shrink-0 items-center justify-center border border-[#c9cccb] bg-white"><div className="h-px w-[5px] bg-black" />{!minus && <div className="absolute h-[5px] w-px bg-black" />}</div>
);
const CheckBox = () => <div className="flex size-3 shrink-0 items-center justify-center border border-black bg-white"><Check s={11} /></div>;

const rows = [
  <><Expander /><span className="ml-[4px]"><S s={17}><Box t="none" l="none" r="none" st="#1c8a4c" /><path d="M12 2V10M3 17L21 6M3 6L21 17" stroke="#1c8a4c" strokeWidth="1.400" /><path d="M13 23L22 17V22z" fill={RB} stroke={RB} /></S></span><span className="ml-[2px]">模型视图</span></>,
  <><Expander /><span className="ml-[7px]"><Check /></span><span className="ml-[2px]"><S s={15} v="0 0 16 16"><path d="M1 4L13 1V12L1 15z" stroke={RB} strokeWidth="1.400" /><circle cx="8" cy="7" r="3.500" fill="#7a6aa8" stroke="#334" /><path d="M12 6l3 2v5h-4" stroke="#334" /></S></span><span className="ml-[2px]">摄像机</span></>,
  <><Expander minus /><span className="ml-[4px] mt-[3px]"><S w="17" h="14" v="0 0 17 14"><path d="M1 13V2H6L8 4H14V6" fill="#e0ac30" stroke="#7a5a10" /><path d="M1 13L5 6H17L13 13z" fill="#fbdc78" stroke="#7a5a10" /></S></span><span className="ml-[2px]">模型历史记录</span></>,
  <><span className="w-[35px]" /><CheckBox /><span className="ml-[2px]"><S s={17}><Box /></S></span><span className="ml-[2px] text-[#e0605c]">块 (1)</span></>,
  <><span className="w-[35px]" /><CheckBox /><span className="ml-[2px]"><SplitBody s={17} /></span><span className="ml-[2px] font-bold">拆分体 (2)</span></>,
];

function SidePanel() {
  return (
    <div className="flex w-[332px] flex-col border-l border-[#8fa5ac] pl-[9px] text-[12px] leading-none text-[#1e1e1e]">
      <div className="flex h-7 items-center pl-[3px] pt-[2px]"><div className="mt-[2px] h-[11px] w-[12px] border border-black" /><span className="ml-[10px]">部件导航器</span></div>
      <div className="relative flex h-[421px] w-[316px] flex-col border border-[#d0d3d2] p-px">
        <div className="flex h-[21px] items-center border-b border-[#c9cccb] bg-[#edefee] pt-px">
          <div className="flex h-full w-[200px] items-center border-r border-[#c9cccb] pl-[6px]">名称<span className="ml-[18px]"><S w="9" h="5" v="0 0 9 5"><path d="M0 5H9L4.500 0z" fill="#111" stroke="none" /></S></span></div>
          <div className="flex h-full w-[100px] items-center border-r border-[#c9cccb] pl-[6px]">最新</div>
          <div className="w-[12px] overflow-hidden whitespace-nowrap pl-[6px]">附</div>
        </div>
        <div className="h-[380px] overflow-hidden">
          {Array.from({ length: 19 }, (_, i) => (
            <div key={i} className={'flex h-5 border-b border-[#e3e6e5] ' + (i % 2 ? 'bg-[#f5f7f6]' : 'bg-[#fdfdfd]')}>
              <div className="flex w-[200px] items-center border-r border-[#dfe2e1] pl-[5px]">{rows[i]}</div>
              <div className="flex w-[100px] items-center border-r border-[#dfe2e1] pl-[6px]">{(i === 3 || i === 4) && <Check />}</div>
            </div>
          ))}
        </div>
        <svg width="40" height="100" className="absolute left-[6px] top-[22px]" fill="none" stroke="#999" strokeDasharray="1 1"><path d="M4.500 10V50M9 10.500H13M9 30.500H13M9 50.500H13M23.500 60V90.500H32M23.500 70.500H32" /></svg>
        <div className="flex h-[15px] items-center bg-[#edefee]">
          <Cell className="w-[17px]"><S w="7" h="9" v="0 0 7 9"><path d="M5.500 1L2 4.500 5.500 8" strokeWidth="1.700" /></S></Cell>
          <div className="h-full w-[216px] bg-[#c8cac9]" />
          <Cell className="ml-auto w-[17px]"><S w="7" h="9" v="0 0 7 9"><path d="M1.500 1L5 4.500 1.500 8" strokeWidth="1.700" /></S></Cell>
        </div>
      </div>
      <div className="h-[5px] w-[316px] border border-[#a3a6a5] bg-[#d5d8d7]" />
      <div className="flex h-[25px] w-[316px] items-center justify-between border-b-2 border-[#d0d3d2] pl-[6px] pr-[5px] pt-[2px] text-[13.800px] text-[#12627c]">相关性<span className="-mt-[3px]"><Chev /></span></div>
      <div className="h-[329px] w-[316px] border border-t-0 border-[#d0d3d2] px-[6px]">
        <div className="flex h-[27px] items-center justify-between pb-[4px] text-[13.800px] text-[#12627c]">细节<span className="-mr-[1px]"><Chev up /></span></div>
        <div className="h-[294px] w-[302px] border border-[#d0d3d2] p-[2px] pt-px">
          <div className="flex h-[21px] items-center border-b border-[#c9cccb] bg-[#edefee] pt-px">
            <div className="flex h-full w-[63px] items-center border-r border-[#c9cccb] pl-[5px]">参数</div>
            <div className="flex h-full w-[40px] items-center border-r border-[#c9cccb] pl-[6px]">值</div>
            <div className="flex h-full w-[88px] items-center border-r border-[#c9cccb] pl-[6px]">表达式<span className="ml-[18px]"><S w="9" h="5" v="0 0 9 5"><path d="M0 5H9L4.500 0z" fill="#111" stroke="none" /></S></span></div>
          </div>
          <div className="h-[269px] overflow-hidden">
            {Array.from({ length: 14 }, (_, i) => (
              <div key={i} className={'flex h-5 border-b border-[#e3e6e5] ' + (i % 2 ? 'bg-[#f5f7f6]' : 'bg-[#fdfdfd]')}>
                <div className="w-[63px] border-r border-[#dfe2e1]" /><div className="w-[40px] border-r border-[#dfe2e1]" /><div className="w-[88px] border-r border-[#dfe2e1]" />
              </div>
            ))}
          </div>
        </div>
      </div>
      <div className="flex h-[24px] w-[316px] items-center justify-between border-b-2 border-[#d0d3d2] pl-[6px] pr-[5px] pt-[3px] text-[13.800px] text-[#12627c]">预览<span className="-mt-[3px]"><Chev /></span></div>
    </div>
  );
}

const stripIcons = [
  ['h-[27px] pl-[5px]', <S s={14} v="0 0 14 14"><circle cx="7" cy="7" r="4.500" strokeWidth="1.400" /><circle cx="7" cy="7" r=".8" fill="#333" /><path d="M7 0v2.500M7 11.500V14M0 7h2.500M11.500 7H14M2 2l1.800 1.800M10.200 10.200L12 12M2 12l1.800-1.800M10.200 3.800L12 2" strokeWidth="1.400" /></S>],
  ['mt-[13px] h-[44px]', <S><Box t="#fbe27a" l="#e8bc3c" r="#c8962c" st="#8a6a18" tf="translate(2 -1) scale(.4)" /><Box t="#fbe27a" l="#e8bc3c" r="#c8962c" st="#8a6a18" tf="translate(-1 4) scale(.42)" /><Box t="#fbe27a" l="#e8bc3c" r="#c8962c" st="#8a6a18" tf="translate(5 4) scale(.42)" /><Box t="#fbe27a" l="#e8bc3c" r="#c8962c" st="#8a6a18" tf="translate(12 13) scale(.45)" /><path d="M5 15V24M5 19H11M14 12.500H23" stroke="#1c2a8c" strokeWidth="1.400" /></S>],
  ['h-[40px]', <S><path d="M4 1L11 6 4 11zM20 1L13 6 20 11z" fill="#1c1c9c" stroke="none" /><path d="M12 0V24" strokeDasharray="2 1.500" /><path d="M2 14H10V22H2z" fill="#fbe24a" stroke="#6a5a10" /><path d="M14 13L22 23H14z" fill="#c01c1c" stroke="#6a1010" /></S>],
  ['h-[45px] bg-[#fdfdfd] w-[29px] self-start -ml-px border-y border-r border-[#b5b8b7]', <S><path d="M1 4V10Q6 13 10 10V4z" fill="#c46aa8" stroke="#6c2458" /><ellipse cx="5.500" cy="4" rx="4.500" ry="2" fill="#eec2e0" stroke="#6c2458" /><path d="M5 14V24M5 19H11M13 10H22" stroke="#1c1c5c" strokeWidth="1.400" /><circle cx="16" cy="19" r="4" stroke="#8a2870" /><circle cx="16" cy="19" r="1.500" stroke="#8a2870" /></S>],
  ['h-[42px]', <S><path d="M1 7L6 1H12V17L7 23H1z" fill="#f09a3c" stroke="#8a4a10" /><path d="M7 7L12 1H17V17L12 23H7z" fill="#4cc43c" stroke="#1c6a18" /><path d="M13 7L18 1H23V17L18 23H13z" fill="#5a9cf0" stroke="#1c4a9c" /><path d="M18 7V23L23 17V1z" fill="#2c64c4" stroke="#1c4a9c" /><path d="M2 10h4M2 19h4M8 10h4M8 19h4M14 10h4M14 19h4" stroke="#fff" /></S>],
  ['mt-[9px] h-[46px]', <S><circle cx="8" cy="16" r="7.500" fill="#2f7ad0" stroke="#1c4a90" /><path d="M8 11.500v2M8 15v5M6.500 15H8M6 20h4" stroke="#fff" strokeWidth="1.800" /><path d="M9 6Q17 7 18 16M9 1Q22 2 23 15" stroke="#4a7ac0" strokeWidth="2" /></S>],
  ['mt-[8px] h-[45px]', <S><path d="M3 1H15L21 7V23H3z" fill="#f8fafc" stroke="#4a7aa8" /><path d="M15 1V7H21" stroke="#4a7aa8" /><circle cx="12" cy="15" r="5.500" fill="#4a8aa0" stroke="#2a6a58" /><path d="M12 10l3 7H9z" fill="#d8f0b8" stroke="none" /></S>],
  ['mt-[10px] h-[44px]', <S><circle cx="12" cy="12" r="10.800" fill="#8c9aa2" stroke="#5a6468" /><circle cx="12" cy="12" r="8.500" fill="#eef4fa" stroke="#78868c" /><path d="M12 5V12H17" stroke="#223" strokeWidth="1.600" /><path d="M12 4v1M12 19v1M4 12h1M19 12h1" /></S>],
  ['h-[40px]', <S><path d="M2 1H9V23H2z" fill="url(#gR)" stroke="none" /><path d="M12 8L21 22" stroke="#111" strokeWidth="2.600" /><path d="M12 2L13 6 17 7 13.500 8.500 12 12 10 8.500 7 7 10.500 6z" fill="#fff" stroke="none" /></S>],
  ['h-[44px]', <S><path d="M3 2H9V20H3z" fill="#4a8ae0" stroke="#2c5ab0" strokeDasharray="2 1" /><path d="M9 6H23L18 10H11M13 13H20L17 16" stroke="#5a6ac0" /><path d="M12 9L20 21" stroke="#111" strokeWidth="2.600" /><path d="M0 22Q6 18 12 22" stroke="#5ab04a" /></S>],
  ['h-[40px]', <S><path d="M10 4Q14 0 21 4L17 5 20 7Q14 5 10 8zM11 7L7 14" fill="#888" stroke="#556" /><path d="M2 14L6 12 9 16 16 18 14 23H6z" fill="#a8b0d8" stroke="#445" /><circle cx="5" cy="21" r="2.500" fill="#e8a03c" stroke="none" /></S>],
];

const SideStrip = () => (
  <div className="flex w-8 shrink-0 flex-col items-center border-l border-[#a9acab] bg-[#d8dad9] pr-[5px]">
    {stripIcons.map(([c, ic], i) => <Cell key={i} className={c}>{ic}</Cell>)}
  </div>
);

const Nx = ({ s }) => (
  <S s={s}><circle cx="12" cy="13" r="8.500" fill="#3ab4d8" stroke="none" /><path d="M6 6a9 9 0 0 0 3 14Q14 12 12 5z" fill="#c0ecf8" stroke="none" /><path d="M3 2L14 1 12 12z" fill="#c4203c" stroke="none" /><path d="M20 6Q27 9 18 16T2 22" stroke="#e8b83c" strokeWidth="2" /></S>
);
const Bee = ({ s }) => (
  <S s={s}><ellipse cx="6" cy="11" rx="5.500" ry="3" fill="#eef6f8" stroke="#9ab" transform="rotate(14 6 11)" /><ellipse cx="8" cy="15.500" rx="3.500" ry="2.300" fill="#dfeef2" stroke="#9ab" /><circle cx="16" cy="14" r="5.500" fill="#e8d038" stroke="#6a6a10" /><path d="M14 9Q12 14 14 19M18 9Q17 14 18 19" stroke="#444" strokeWidth="1.300" /><path d="M17 8Q17 4 20 3M20 8Q21 5 24 5" stroke="#1c4a44" strokeWidth="1.400" /></S>
);
const Ninja = ({ s }) => (
  <S s={s}><circle cx="12" cy="12" r="11" fill="#e87818" stroke="#b04c10" /><path d="M5 4L8 7H16L19 4V13Q18 18 12 18T5 13z" fill="#201810" stroke="none" /><path d="M5.500 10Q12 13 18.500 10V12Q12 14 5.500 12z" fill="#f4e0c8" stroke="none" /><path d="M9 19H15V22H9z" fill="#201810" stroke="none" /><path d="M12 18V21" stroke="#fff" strokeWidth="1.300" /></S>
);
const apps = [
  ['', <S><path d="M2 11Q3 2 12 2T22 12V14H8Q9 19 14 19 17 19 20 17.500V21Q17 23 12.500 23 4 22 4 14 4 9 9 6.500 4 7 2 11zM8 10.500H15.500Q15 6.500 12 6.500T8 10.500z" fill="#1a7ad4" stroke="none" fillRule="evenodd" /></S>, ''],
  ['', <S><path d="M1 3H9L11 5H22V20H1z" fill="#f5c84c" stroke="none" /><path d="M1 3H9V6H1z" fill="#d89c20" stroke="none" /><path d="M4 21V15Q4 12 7 12H17Q20 12 20 15V21H16V16H8V21z" fill="#3c8ccc" stroke="none" /></S>, 'files'],
  ['', <Bee s={25} />, ''],
  ['', <S><ellipse cx="11" cy="9" rx="10.500" ry="7" fill="#f4e6e6" stroke="#c04c50" strokeWidth="1.400" transform="rotate(-18 11 9)" /><path d="M8 5L15 13M14 4L9 13" stroke="#778" strokeWidth="1.400" /><circle cx="15" cy="20" r="2.500" stroke="#2f7ab8" strokeWidth="1.700" /><circle cx="20" cy="15.500" r="2.500" stroke="#2f7ab8" strokeWidth="1.700" /></S>, ''],
  ['bg-[#54504d]', <Nx s={25} />, 'full'],
  ['', <Ninja s={25} />, 'on'],
  ['', <S><circle cx="12" cy="12" r="11" fill="#e0b820" stroke="none" /><path d="M12 12L2.500 6.500A11 11 0 0 0 12 23L16 14z" fill="#1f9c58" stroke="none" /><path d="M12 6.700H21.600A11 11 0 0 0 2.500 6.500L7.500 14z" fill="#dc4a3c" stroke="none" /><circle cx="12" cy="12" r="4.800" fill="#4c84ec" stroke="#fff" strokeWidth="1.500" /></S>, 'on'],
  ['', <S><path d="M1 1H23V23H1z" fill="#3ca4e8" stroke="none" /><path d="M1 16L9 9 21 23H1z" fill="#1c4c9c" stroke="none" /><path d="M12 13L16 10 23 18V23H21z" fill="#5a80cc" stroke="none" /><circle cx="16" cy="6" r="2" fill="#fff" stroke="none" /></S>, 'on'],
];
const W = '#f2f2f2';
const tray = [
  <S s={14} v="0 0 14 14"><path d="M1 10L7 4 13 10" stroke={W} strokeWidth="1.400" /></S>,
  <S s={16} v="0 0 16 16"><path d="M5 0H11V10H5z" fill={W} stroke="none" /><path d="M3 8V12H13V8M8 12V15M5 15.500H11" stroke={W} /></S>,
  <S s={16} v="0 0 16 16"><path d="M5 4H15V15H5zM5 12H1.500V1H11V4" stroke={W} /></S>,
  <Ninja s={17} />,
  <S s={17} v="0 0 17 17"><path d="M6 3H16V11H5V7M10 11V15M6 15H14M1 1H5V6H1zM3 6V14" stroke={W} /></S>,
  <div className="flex size-4 items-center justify-center rounded-[3px] bg-[#cc2230]"><S s={14} v="0 0 14 14"><circle cx="4" cy="4" r="2.300" stroke="#fff" strokeWidth="1.500" /><path d="M8 2h4v3M3 8v4h3M9 11h4" stroke="#fff" strokeWidth="1.500" /></S></div>,
  <Bee s={16} />,
  <S s={17}><circle cx="12" cy="12" r="10.500" fill="#1c78dc" stroke="#fff" strokeWidth="1.500" /><circle cx="12" cy="12" r="6.500" fill="#fff" stroke="none" /><path d="M8 11l4 4 6-8" stroke="#1c78dc" strokeWidth="2.500" /></S>,
  null,
  <S w="15" h="11" v="0 0 15 11"><path d="M0 0H15V11H0z" fill="#3f7a10" stroke="none" /><path d="M1 6Q6 0 13 5Q8 10 4 6Q7 3 10 5.500" stroke="#c8e888" /></S>,
  <S s={17}><circle cx="12" cy="12" r="11" fill="#8f8f8f" stroke="#bbb" /><path d="M6 16V9L10 6 13 9 17 8 15 12 18 17M9 17V12M13 13v5" stroke="#e4e4e4" strokeWidth="1.300" /></S>,
  <S s={17}><path d="M11 1L20 4V11Q19 18 11 22 3 18 2 11V4z" fill="#fff" stroke="none" /><path d="M11 1V22M2 11H20" stroke="#222" strokeWidth="1.500" /><circle cx="18" cy="18" r="6" fill="#1c9c50" stroke="none" /><path d="M15 18l2.500 2.500L21 16" stroke="#fff" strokeWidth="1.600" /></S>,
  <S s={17} v="0 0 17 17"><path d="M1 6H4L8 2.500V14.500L4 11H1zM10.500 6Q12 8.500 10.500 11M12.500 4Q15.500 8.500 12.500 13M14.500 2Q19 8.500 14.500 15" stroke={W} /></S>,
];

function Taskbar() {
  return (
    <div className="flex h-10 items-center bg-[#23211f] text-white">
      <Cell className="w-[48px]"><S s={16} v="0 0 16 16"><path d="M0 2.300L7 1.300V7.500H0zM8 1.100L16 0V7.500H8zM0 8.500H7V14.700L0 13.700zM8 8.500H16V16L8 14.900z" fill="#fff" stroke="none" /></S></Cell>
      <Cell className="w-[48px]"><S s={16} v="0 0 16 16"><circle cx="8" cy="8" r="6.700" stroke="#fff" strokeWidth="2" /></S></Cell>
      <Cell className="w-[48px]"><S s={16} v="0 0 16 16"><path d="M1 0V3H10V0M1 16V13H10V16M1 5H10V11H1zM14.500 0V5M14.500 8V16" stroke={W} /><path d="M13.500 5h2v2.500h-2z" fill="#fff" stroke="none" /></S></Cell>
      <div className="ml-[3px] flex h-full">
        {apps.map(([bg, ic, st], i) => (
          <div key={i} className={'relative flex h-full w-[49px] items-center justify-center ' + bg}>
            {ic}
            {st === 'on' && <div className="absolute bottom-0 h-[2px] w-10 bg-[#7cc4a0]" />}
            {st === 'full' && <div className="absolute bottom-0 h-[2px] w-full bg-[#7cc4a0]" />}
            {st === 'files' && <div className="absolute bottom-0 flex h-[2px] w-10"><div className="w-[31px] bg-[#7cc4a0]" /><div className="flex-1 bg-[#4c8068]" /></div>}
          </div>
        ))}
      </div>
      <div className="ml-auto flex items-center">
        {tray.map((t, i) => <Cell key={i} className="w-6">{t}</Cell>)}
        <Cell className="w-[20px] text-[16px] leading-none">英</Cell>
        <Cell className="ml-[13px] w-[14px]"><div className="flex size-[14px] items-center justify-center bg-white text-[12px] font-bold leading-none text-black">五</div></Cell>
        <div className="ml-[15px] flex w-[66px] flex-col items-center gap-[7px] whitespace-nowrap text-[12px] leading-[12px]"><span>18:36</span><span>2020/5/13</span></div>
        <div className="relative ml-[14px] w-[37px]"><S s={17} v="0 0 17 17"><path d="M0 1H17V13H8L4 17V13H0z" fill="#fff" stroke="none" /><path d="M3 4.500H14M3 7.500H14M3 10.500H9" stroke="#222" /></S>
          <div className="absolute left-[7px] top-[7px] flex size-[16px] items-center justify-center rounded-full border border-[#9a9a9a] bg-[#333] text-[11px] font-bold leading-none">5</div></div>
        <div className="mr-1 h-10 w-px bg-[#777]" />
      </div>
    </div>
  );
}

export default function App() {
  return (
    <div className="flex h-[1080px] w-[1920px] flex-col overflow-hidden bg-[#fdfdfd] font-['Noto_Sans','Noto_Sans_CJK_SC',sans-serif]">
      <Defs />
      <TitleBar />
      <TabBar />
      <Ribbon />
      <MenuBar />
      <div className="flex h-[838px]">
        <div className="relative flex w-[1556px] flex-col bg-[#fdfdfd] pl-px pr-px">
          <div className="flex h-[23px] items-start border-b-2 border-[#539fb5]">
            <div className="flex h-[21px] w-[113px] items-center bg-[#539fb5] pl-[6px] text-[12px] leading-none text-white">
              <S s={15} v="0 0 16 16"><path d="M1 5L6 2 8 3V8L15 10V13L8 16 1 12z" fill="#3c68d0" stroke="#16307c" /><path d="M1 5L5 7V11L12 14" stroke="#cfe0ff" /></S>
              <span className="ml-[4px]">Part4.prt</span>
              <span className="ml-[5px]"><S s={12} v="0 0 12 12"><path d="M7 1H2V11H9V8" stroke="#fff" strokeWidth="1.400" /><path d="M4 8L9 3M6 1h3l1 3" stroke="#fff" strokeWidth="1.500" /></S></span>
              <span className="ml-[5px]"><S s={9} v="0 0 10 10"><path d="M1 1L9 9M9 1L1 9" stroke="#b4b8ba" strokeWidth="2" /></S></span>
            </div>
          </div>
          <div className="h-[813px] overflow-hidden bg-[linear-gradient(to_bottom,#1f2a4a_0%,#19446b_31%,#115880_55%,#0c6792_73%,#0c6792_100%)]"><Scene /></div>
          <Dialog />
        </div>
        <SidePanel />
        <SideStrip />
      </div>
      <div className="flex h-[22px] items-center border-t border-[#a3b3ba] pb-px pl-[3px] text-[11.100px] font-bold leading-none text-[#1e1e1e]">
        选择对象并使用 MB3，或者双击某一对象
        <Cell className="ml-auto mr-[4px] w-4"><S s={16} v="0 0 16 16"><path d="M.5.5H15.500V15.500H.5z" fill="#d5d8d7" stroke="#b5b8b7" /><path d="M3 4l3 8M6 4q3 3 6 0v5q-3 2-5 0M9 4v6" stroke="#999" /></S></Cell>
        <Cell className="mr-[11px] w-4"><S s={16} v="0 0 16 16"><path d="M1 5V1H5M11 1H15V5M15 11V15H11M5 15H1V11" stroke="#8a8d8c" /><path d="M3.500 3.500h9v9h-9z" fill="#fff" /><path d="M5 6h6v5H5z" fill="#7c98c4" stroke="none" /></S></Cell>
        <Cell className="mr-[28px] w-4"><S s={15} v="0 0 16 16"><circle cx="8" cy="9" r="6.500" fill="#38b0c0" stroke="none" /><path d="M2 2L10 1 8 9z" fill="#b43c30" stroke="none" /></S></Cell>
      </div>
      <Taskbar />
    </div>
  );
}
